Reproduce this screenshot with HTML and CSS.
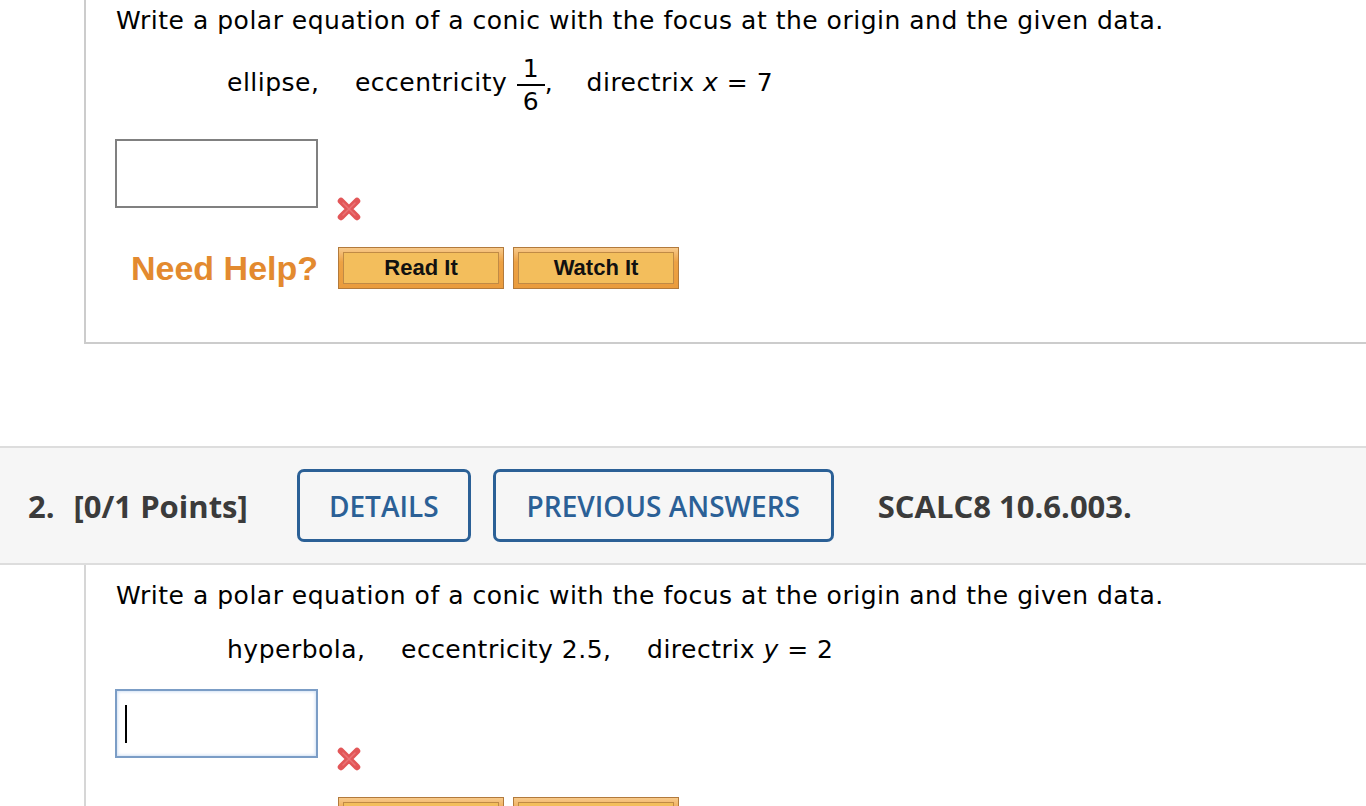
FILE: index.html
```html
<!DOCTYPE html>
<html lang="en">
<head>
<meta charset="utf-8">
<title>Question</title>
<link rel="stylesheet" href="styles.css">
</head>
<body>
<section class="question question--first">
  <p class="prompt">Write a polar equation of a conic with the focus at the origin and the given data.</p>
  <div class="givens givens--frac">
    <span class="given">ellipse,</span>
    <span class="given">eccentricity <span class="frac"><span class="num">1</span><span class="den">6</span></span>,</span>
    <span class="given">directrix <i>x</i> = 7</span>
  </div>
  <div class="answer-row answer-row--frac">
    <div class="answer"></div>
    <svg class="wrong" viewBox="0 0 26 26" width="26" height="26" aria-hidden="true">
      <path d="M5 5 L21 21 M21 5 L5 21" stroke="#e25658" stroke-width="6.5" stroke-linecap="round"/>
      <path d="M7 7 L19 19 M19 7 L7 19" stroke="#f08c8e" stroke-width="1.5" stroke-linecap="round" opacity="0.55"/>
    </svg>
  </div>
  <div class="help">
    <span class="help-label">Need Help?</span>
    <button class="help-btn"><span>Read It</span></button>
    <button class="help-btn"><span>Watch It</span></button>
  </div>
</section>

<header class="qhead">
  <span class="qnum">2.</span>
  <span class="qpts">[0/1 Points]</span>
  <button class="qbtn qbtn--details">DETAILS</button>
  <button class="qbtn qbtn--prev">PREVIOUS ANSWERS</button>
  <span class="qcode">SCALC8 10.6.003.</span>
</header>

<section class="question question--second">
  <p class="prompt">Write a polar equation of a conic with the focus at the origin and the given data.</p>
  <div class="givens">
    <span class="given">hyperbola,</span>
    <span class="given">eccentricity 2.5,</span>
    <span class="given">directrix <i>y</i> = 2</span>
  </div>
  <div class="answer-row">
    <div class="answer answer--focus"><span class="caret"></span></div>
    <svg class="wrong" viewBox="0 0 26 26" width="26" height="26" aria-hidden="true">
      <path d="M5 5 L21 21 M21 5 L5 21" stroke="#e25658" stroke-width="6.5" stroke-linecap="round"/>
      <path d="M7 7 L19 19 M19 7 L7 19" stroke="#f08c8e" stroke-width="1.5" stroke-linecap="round" opacity="0.55"/>
    </svg>
  </div>
  <div class="help">
    <span class="help-label">Need Help?</span>
    <button class="help-btn"><span>Read It</span></button>
    <button class="help-btn"><span>Watch It</span></button>
  </div>
</section>
</body>
</html>
```

FILE: styles.css
```css
html, body {
  margin: 0;
  padding: 0;
  background: #fff;
}
body {
  font-family: "DejaVu Sans", Verdana, sans-serif;
  color: #000;
  overflow: hidden;
  height: 806px;
}

.question {
  margin-left: 84px;
  padding-left: 30px;
  border-left: 2px solid #cccccc;
}
.question--first {
  padding-top: 6px;
  padding-bottom: 53px;
  border-bottom: 2px solid #cccccc;
}
.question--second {
  padding-top: 16px;
  border-left-color: #d6d6d6;
}

.prompt {
  margin: 0;
  font-size: 25px;
  line-height: 30px;
  letter-spacing: 0.5px;
  white-space: nowrap;
}

.givens {
  display: block;
  padding-left: 111px;
  margin-top: 24px;
  font-size: 25px;
  line-height: 30px;
  letter-spacing: 0.5px;
  white-space: nowrap;
}
.givens--frac {
  margin-top: 20px;
}
.given {
  display: inline;
  margin-right: 27px;
  white-space: pre;
}
.givens--frac .given:nth-child(2) {
  margin-right: 25px;
}
.frac {
  display: inline-flex;
  flex-direction: column;
  align-items: center;
  vertical-align: 13.5px;
  letter-spacing: 0;
  margin-left: 1px;
}
.num {
  line-height: 26px;
  padding: 0 6px 2px;
  border-bottom: 2px solid #000;
}
.den {
  line-height: 26px;
  margin-top: 3px;
}

.answer-row {
  display: flex;
  align-items: flex-start;
  margin-top: 24px;
  margin-left: -1px;
}
.answer {
  box-sizing: border-box;
  width: 203px;
  height: 69px;
  border: 2px solid #808080;
  background: #fff;
  display: flex;
  align-items: center;
}
.answer--focus {
  border-color: #7b9dc6;
  box-shadow: inset 0 0 3px 1px #d3e2f5;
}
.caret {
  display: block;
  width: 2px;
  height: 38px;
  margin-left: 8px;
  background: #000;
}
.wrong {
  display: block;
  margin-left: 18px;
  margin-top: 57px;
}

.help {
  display: flex;
  align-items: center;
  margin-top: 25px;
  padding-left: 15px;
  height: 42px;
}
.help-label {
  font-family: "Liberation Sans", Arial, sans-serif;
  font-weight: bold;
  font-size: 34px;
  color: #e38a2f;
  margin-right: 20px;
}
.help-btn {
  box-sizing: border-box;
  width: 166px;
  height: 42px;
  margin: 0 9px 0 0;
  padding: 4px;
  border: 1px solid #b27a3c;
  background: linear-gradient(#f7c98a, #eda244 35%, #ea9c3d);
  cursor: pointer;
}
.help-btn span {
  box-sizing: border-box;
  display: flex;
  align-items: center;
  justify-content: center;
  height: 100%;
  border: 1px solid #c08a45;
  background: #f3be5c;
  font-family: "Liberation Sans", Arial, sans-serif;
  font-weight: bold;
  font-size: 22px;
  color: #111;
}

.qhead {
  display: flex;
  align-items: center;
  margin-top: 102px;
  height: 115px;
  padding-left: 28px;
  background: #f6f6f6;
  border-top: 2px solid #dddddd;
  border-bottom: 2px solid #dddddd;
  font-family: "Open Sans", sans-serif;
  color: #3b3b3b;
  white-space: nowrap;
}
.qnum {
  font-size: 31px;
  font-weight: 700;
  margin-right: 19px;
}
.qpts {
  font-size: 31px;
  font-weight: 700;
  margin-right: 49px;
}
.qbtn {
  box-sizing: border-box;
  height: 73px;
  border: 3px solid #2b6096;
  border-radius: 7px;
  background: transparent;
  color: #2b6096;
  font-family: "Open Sans", sans-serif;
  font-size: 28px;
  font-weight: 600;
  padding: 0;
  margin-right: 22px;
  cursor: pointer;
}
.qbtn--details {
  width: 174px;
}
.qbtn--prev {
  width: 341px;
  margin-right: 44px;
}
.qcode {
  font-size: 31px;
  font-weight: 700;
}
```
